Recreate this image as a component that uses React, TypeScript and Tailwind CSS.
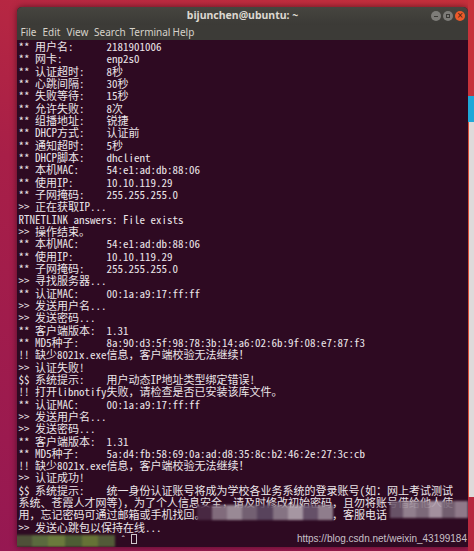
import React from "react";

const WIDE = /[\u1100-\u115f\u2e80-\u303f\u3040-\ua4cf\uac00-\ud7a3\uf900-\ufaff\ufe30-\ufe4f\uff00-\uff60\uffe0-\uffe6]/;

const cellsOf = (s: string) => Array.from(s).reduce((n, ch) => n + (WIDE.test(ch) ? 2 : 1), 0);

// pad the label part out to the value column (16 cells)
const pad = (head: string, text: string) => head + " ".repeat(Math.max(1, 16 - cellsOf(head))) + text;

const lines: string[] = [
  pad("** 用户名:", "2181901006"),
  pad("** 网卡:", "enp2s0"),
  pad("** 认证超时:", "8秒"),
  pad("** 心跳间隔:", "30秒"),
  pad("** 失败等待:", "15秒"),
  pad("** 允许失败:", "8次"),
  pad("** 组播地址:", "锐捷"),
  pad("** DHCP方式:", "认证前"),
  pad("** 通知超时:", "5秒"),
  pad("** DHCP脚本:", "dhclient"),
  pad("** 本机MAC:", "54:e1:ad:db:88:06"),
  pad("** 使用IP:", "10.10.119.29"),
  pad("** 子网掩码:", "255.255.255.0"),
  ">> 正在获取IP...",
  "RTNETLINK answers: File exists",
  ">> 操作结束。",
  pad("** 本机MAC:", "54:e1:ad:db:88:06"),
  pad("** 使用IP:", "10.10.119.29"),
  pad("** 子网掩码:", "255.255.255.0"),
  ">> 寻找服务器...",
  pad("** 认证MAC:", "00:1a:a9:17:ff:ff"),
  ">> 发送用户名...",
  ">> 发送密码...",
  pad("** 客户端版本:", "1.31"),
  pad("** MD5种子:", "8a:90:d3:5f:98:78:3b:14:a6:02:6b:9f:08:e7:87:f3"),
  "!! 缺少8021x.exe信息，客户端校验无法继续！",
  ">> 认证失败!",
  pad("$$ 系统提示:", "用户动态IP地址类型绑定错误!"),
  "!! 打开libnotify失败，请检查是否已安装该库文件。",
  pad("** 认证MAC:", "00:1a:a9:17:ff:ff"),
  ">> 发送用户名...",
  ">> 发送密码...",
  pad("** 客户端版本:", "1.31"),
  pad("** MD5种子:", "5a:d4:fb:58:69:0a:ad:d8:35:8c:b2:46:2e:27:3c:cb"),
  "!! 缺少8021x.exe信息，客户端校验无法继续！",
  ">> 认证成功!",
  pad("$$ 系统提示:", "统一身份认证账号将成为学校各业务系统的登录账号(如：网上考试测试"),
  "系统、苍霞人才网等)，为了个人信息安全，请及时修改初始密码，且勿将账号借给他人使",
  "用，忘记密码可通过邮箱或手机找回。" + " ".repeat(23) + "，客服电话",
  ">> 发送心跳包以保持在线...",
];

function Mosaic({ cells }: { cells: string[] }) {
  return (
    <div className="flex h-full w-full blur-[1px]">
      {cells.map((c, i) => (
        <div key={i} className="h-full flex-1" style={{ background: c }} />
      ))}
    </div>
  );
}

const menu: [string, string][] = [
  ["File", "w-[22px]"],
  ["Edit", "w-[24px]"],
  ["View", "w-[27.5px]"],
  ["Search", "w-[35.5px]"],
  ["Terminal", "w-[43px]"],
  ["Help", "w-[30px]"],
];

export default function App() {
  return (
    <div className="flex h-[551px] w-[474px] overflow-hidden bg-[linear-gradient(200deg,#c6303c_0%,#a81f48_45%,#961852_100%)]">
      <div className="w-[17px] shrink-0" />

      <div className="flex w-[451px] shrink-0 flex-col pt-[7px]">
        <div className="flex h-[540px] flex-col overflow-hidden rounded-t-[5px] bg-[#2e0a22] shadow-[0_0_6px_rgba(0,0,0,0.5)]">
          {/* title bar */}
          <div className="relative flex h-[18px] shrink-0 items-center justify-center bg-[linear-gradient(#46453f,#3b3a36)]">
            <span className="font-['Noto_Sans','DejaVu_Sans',sans-serif] text-[10.5px] font-bold text-[#dcd8d0]">
              bijunchen@ubuntu: ~
            </span>
            <div className="absolute right-[3px] top-[4px] flex gap-[2px]">
              <span className="flex h-[10px] w-[10px] items-center justify-center rounded-full bg-[#7d7c78]">
                <span className="h-px w-[4px] bg-[#3b3a36]" />
              </span>
              <span className="flex h-[10px] w-[10px] items-center justify-center rounded-full bg-[#7d7c78]">
                <span className="h-[4px] w-[4px] border border-[#3b3a36]" />
              </span>
              <span className="flex h-[10px] w-[10px] items-center justify-center rounded-full bg-[#ec5a2a] font-['DejaVu_Sans',sans-serif] text-[8px] leading-none text-[#3b1a10]">
                ×
              </span>
            </div>
          </div>

          {/* menu bar */}
          <div className="flex h-[15px] shrink-0 items-center bg-[#3c3b37] pl-[3.5px] font-['Noto_Sans','DejaVu_Sans',sans-serif] text-[10px] text-[#d6d2ca]">
            {menu.map(([label, w]) => (
              <span key={label} className={`${w} shrink-0`}>
                {label}
              </span>
            ))}
          </div>

          {/* terminal body */}
          <div className="relative flex-1 pl-[1.5px] font-['Noto_Sans_Mono_CJK_SC','Noto_Sans_CJK_SC','DejaVu_Sans_Mono',monospace] text-[11px] leading-[12.34px] text-[#ebe5e9]">
            {lines.map((l, i) => (
              <div key={i} className="h-[12.34px] whitespace-pre">
                {l}
              </div>
            ))}
            <div className="flex h-[12.34px] items-center">
              <span className="w-[102px] shrink-0" />
              <span className="text-[9px] leading-none">ˆ</span>
              <span className="ml-[5px] h-[10px] w-[6px] border border-[#cfc8cc]" />
            </div>

            {/* pixelated parts of the photo */}
            <div className="absolute left-[180px] top-[465px] h-[15px] w-[136px] opacity-90">
              <Mosaic cells={["#4b2c46", "#8a7686", "#a597a2", "#7b6a7b", "#5d4a63", "#8f7f8e", "#b3a6b0", "#6c5870", "#9a8a98"]} />
            </div>
            <div className="absolute left-[373px] top-[461px] h-[17px] w-[78px] opacity-90">
              <Mosaic cells={["#6e5a6e", "#9c8c99", "#857483", "#b09fac", "#7a6878", "#9a8695"]} />
            </div>
            <div className="absolute left-[-2px] top-[495px] h-[12px] w-[100px]">
              <Mosaic cells={["#4e5038", "#5a6a3e", "#6a7a3c", "#4d5d34", "#657236", "#525a38"]} />
            </div>

            <div className="absolute bottom-[2px] right-[1px] font-['Liberation_Sans','Noto_Sans',sans-serif] text-[10px] leading-[12px] text-[#c8c0c8]">
              https://blog.csdn.net/weixin_43199184
            </div>
          </div>
        </div>
      </div>

      {/* the window behind, at the right edge */}
      <div className="flex w-[6px] shrink-0 flex-col">
        <div className="h-[96px] bg-[#c7323a]" />
        <div className="h-[26px] bg-[#1fa8d8]" />
        <div className="h-[375px] border-l border-[#d9503a] bg-[#dedada]" />
        <div className="flex-1 bg-[#b8283e]" />
      </div>
    </div>
  );
}
